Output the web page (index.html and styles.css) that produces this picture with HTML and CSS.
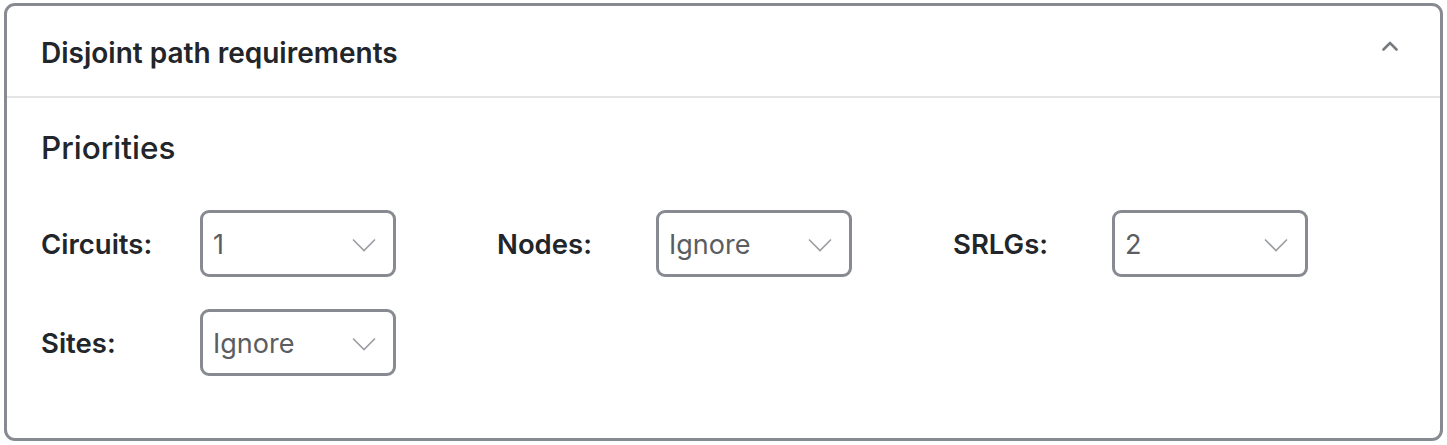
FILE: index.html
```html
<!DOCTYPE html>
<html>
<head>
<meta charset="utf-8">
<link rel="stylesheet" href="styles.css">
</head>
<body>
<div class="page">
  <section class="card">
    <header class="card-header">
      <h2 class="card-title">Disjoint path requirements</h2>
      <svg class="caret" width="16" height="10" viewBox="0 0 16 10"><polyline points="1.5,8.5 8,2 14.5,8.5" fill="none" stroke="#777b80" stroke-width="2.6" stroke-linecap="round" stroke-linejoin="round"/></svg>
    </header>
    <div class="card-body">
      <h3 class="section-title">Priorities</h3>
      <div class="fields">
        <div class="field">
          <span class="field-label">Circuits:</span>
          <div class="select"><span class="select-value">1</span><svg class="chev" width="24" height="14" viewBox="0 0 24 14"><polyline points="1,1.5 12,12.5 23,1.5" fill="none" stroke="#9a9da2" stroke-width="1.6"/></svg></div>
        </div>
        <div class="field">
          <span class="field-label">Nodes:</span>
          <div class="select"><span class="select-value">Ignore</span><svg class="chev" width="24" height="14" viewBox="0 0 24 14"><polyline points="1,1.5 12,12.5 23,1.5" fill="none" stroke="#9a9da2" stroke-width="1.6"/></svg></div>
        </div>
        <div class="field">
          <span class="field-label">SRLGs:</span>
          <div class="select"><span class="select-value">2</span><svg class="chev" width="24" height="14" viewBox="0 0 24 14"><polyline points="1,1.5 12,12.5 23,1.5" fill="none" stroke="#9a9da2" stroke-width="1.6"/></svg></div>
        </div>
        <div class="field">
          <span class="field-label">Sites:</span>
          <div class="select"><span class="select-value">Ignore</span><svg class="chev" width="24" height="14" viewBox="0 0 24 14"><polyline points="1,1.5 12,12.5 23,1.5" fill="none" stroke="#9a9da2" stroke-width="1.6"/></svg></div>
        </div>
      </div>
    </div>
  </section>
</div>
</body>
</html>
```

FILE: styles.css
```css
* { box-sizing: border-box; }
html, body { margin: 0; padding: 0; background: #ffffff; }
body { font-family: Inter, "Noto Sans", "Liberation Sans", sans-serif; color: #222529; }
.page { padding: 3px 4px 4px 4px; }
.card {
  border: 3px solid #878b91;
  border-radius: 11px;
  height: 438px;
  background: #fff;
}
.card-header {
  height: 92px;
  border-bottom: 2px solid #e4e5e7;
  display: flex;
  align-items: center;
  justify-content: space-between;
  padding: 0 42px 0 34px;
}
.card-title { margin: 0; font-size: 28px; font-weight: 600; line-height: 34px; margin-top: 4px; }
.caret { display: block; margin-top: -10px; }
.card-body { padding: 30px 34px 0 34px; }
.section-title { margin: 0; font-size: 31.5px; font-weight: 500; line-height: 40px; }
.fields {
  margin-top: 42px;
  display: grid;
  grid-template-columns: repeat(3, 355px);
  column-gap: 101px;
  row-gap: 32px;
}
.field { display: flex; align-items: center; }
.field-label { width: 159px; font-size: 27.5px; font-weight: 600; }
.select {
  width: 196px;
  height: 67px;
  border: 3px solid #878b91;
  border-radius: 9px;
  display: flex;
  align-items: center;
  justify-content: space-between;
  padding: 2px 17px 0 10px;
}
.select-value { font-size: 27px; color: #5a5d61; }
.chev { display: block; }
```
